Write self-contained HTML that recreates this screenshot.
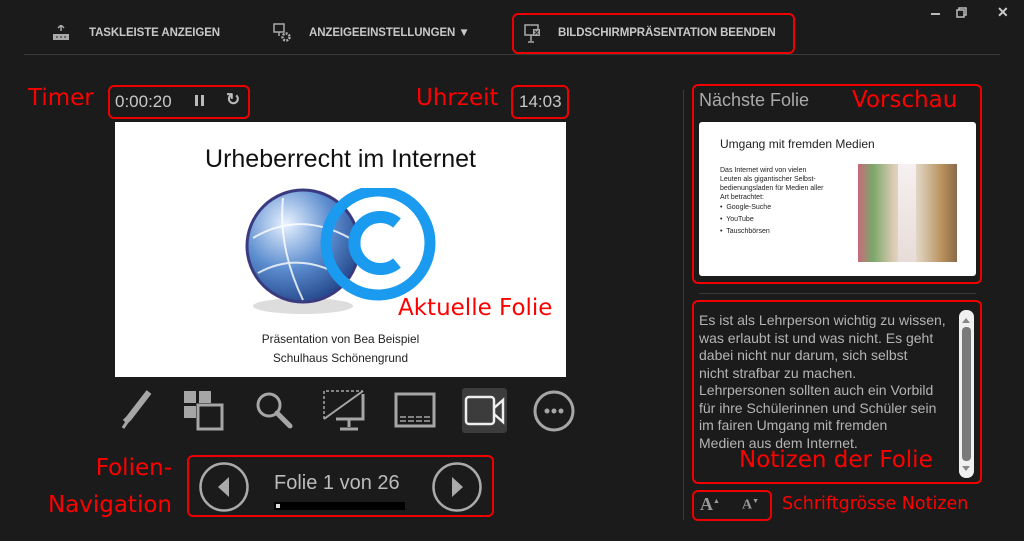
<!DOCTYPE html>
<html><head><meta charset="utf-8"><style>
*{margin:0;padding:0;box-sizing:border-box}
body{width:1024px;height:541px;background:#1b1b1b;position:relative;overflow:hidden;font-family:"Liberation Sans",sans-serif;color:#bbb}
.a{position:absolute}
.red{color:#f00;font-family:"DejaVu Sans","Liberation Sans",sans-serif;white-space:nowrap}
.box{position:absolute;border:2px solid #e00;border-radius:6px}
.tb{font-size:11.5px;font-weight:bold;color:#c8c8c8;letter-spacing:-.1px}
.gi{stroke:#a6a6a6;fill:none;stroke-width:3}
</style></head><body>
<!-- window controls -->
<div class="a" style="left:931px;top:13px;width:9px;height:2px;background:#bbb"></div>
<svg class="a" style="left:956px;top:7px" width="12" height="12"><rect x="1" y="3" width="7" height="7" fill="none" stroke="#bbb" stroke-width="1.5"/><path d="M3 3V1h7v7H8" fill="none" stroke="#bbb" stroke-width="1.5"/></svg>
<div class="a" style="left:997px;top:4px;font-size:14px;font-weight:bold;color:#ccc">✕</div>
<!-- toolbar -->
<svg class="a" style="left:52px;top:25px" width="18" height="16"><path d="M9 0v6M6 3l3-3 3 3" stroke="#aaa" fill="none" stroke-width="1.5"/><rect x="1" y="9" width="16" height="6" fill="#aaa"/><path d="M4 12h2M8 12h2M12 12h2" stroke="#222"/></svg>
<div class="a tb" style="left:89px;top:27px">TASKLEISTE ANZEIGEN</div>
<svg class="a" style="left:273px;top:23px" width="18" height="20"><rect x="1" y="1" width="10" height="8" fill="none" stroke="#aaa" stroke-width="1.5"/><path d="M6 9v4" stroke="#aaa" stroke-width="1.5"/><circle cx="13" cy="14" r="3.5" fill="none" stroke="#aaa" stroke-width="2.5" stroke-dasharray="2 1.2"/></svg>
<div class="a tb" style="left:309px;top:27px">ANZEIGEEINSTELLUNGEN ▼</div>
<div class="box" style="left:512px;top:13px;width:283px;height:41px"></div>
<svg class="a" style="left:524px;top:24px" width="18" height="20"><rect x="1" y="1" width="13" height="10" fill="none" stroke="#aaa" stroke-width="1.5"/><path d="M7 11v6M4 18h6" stroke="#aaa" stroke-width="1.5"/><rect x="9" y="5" width="7" height="7" fill="#aaa"/><path d="M10.5 6.5l4 4M14.5 6.5l-4 4" stroke="#222"/></svg>
<div class="a tb" style="left:558px;top:27px">BILDSCHIRMPRÄSENTATION BEENDEN</div>
<div class="a" style="left:24px;top:54px;width:976px;height:1px;background:#3a3a3a"></div>
<!-- timer -->
<div class="a red" style="left:28px;top:85px;font-size:23px">Timer</div>
<div class="box" style="left:108px;top:85px;width:142px;height:34px"></div>
<div class="a" style="left:115px;top:92px;font-size:17px;color:#c8c8c8">0:00:20</div>
<div class="a" style="left:195px;top:95px;width:3px;height:11px;background:#bbb"></div>
<div class="a" style="left:201px;top:95px;width:3px;height:11px;background:#bbb"></div>
<div class="a" style="left:226px;top:90px;font-size:17px;color:#bbb;font-weight:bold">↻</div>
<div class="a red" style="left:416px;top:85px;font-size:23px">Uhrzeit</div>
<div class="box" style="left:511px;top:85px;width:58px;height:34px"></div>
<div class="a" style="left:519px;top:92px;font-size:17px;color:#c8c8c8">14:03</div>
<!-- slide -->
<div class="a" style="left:115px;top:122px;width:451px;height:255px;background:#fff">
 <div class="a" style="left:0;width:451px;top:23px;text-align:center;font-size:25px;color:#111">Urheberrecht im Internet</div>
 <svg class="a" style="left:128px;top:66px" width="200" height="130">
  <defs><radialGradient id="g" cx="0.35" cy="0.3" r="0.8"><stop offset="0" stop-color="#e8f2ff"/><stop offset="0.5" stop-color="#5d8ed0"/><stop offset="1" stop-color="#1a3c80"/></radialGradient></defs>
  <ellipse cx="60" cy="118" rx="50" ry="8" fill="#ddd"/>
  <circle cx="60" cy="58" r="56" fill="url(#g)" stroke="#3a3a80" stroke-width="3"/>
  <path d="M10 50Q60 20 115 55M15 85Q60 60 110 95M40 10Q35 60 60 112" stroke="#fff" stroke-width="2" fill="none" opacity=".8"/>
  <circle cx="135" cy="55" r="52" fill="none" stroke="#1a9bf0" stroke-width="11"/>
  <path d="M154 35A26 26 0 1 0 154 75" fill="none" stroke="#1a9bf0" stroke-width="12"/>
 </svg>
 <div class="a" style="left:0;width:451px;top:208px;text-align:center;font-size:11.8px;color:#222;line-height:19px">Präsentation von Bea Beispiel<br>Schulhaus Schönengrund</div>
</div>
<div class="a red" style="left:398px;top:295px;font-size:23px">Aktuelle Folie</div>
<!-- tool icons -->
<svg class="a" style="left:115px;top:388px" width="42" height="44"><path d="M34 4L14 30l-4 4 4-4z" stroke="#a6a6a6" stroke-width="6" stroke-linecap="round"/><path d="M8 40l4-6" stroke="#a6a6a6" stroke-width="3"/></svg>
<svg class="a" style="left:183px;top:390px" width="42" height="42"><rect x="1" y="1" width="12" height="12" fill="#a6a6a6"/><rect x="16" y="1" width="12" height="12" fill="#a6a6a6"/><rect x="1" y="16" width="12" height="12" fill="#a6a6a6"/><rect x="15" y="15" width="24" height="24" class="gi"/></svg>
<svg class="a" style="left:254px;top:390px" width="42" height="42"><circle cx="15" cy="15" r="11" class="gi"/><path d="M23 23l13 13" stroke="#a6a6a6" stroke-width="5" stroke-linecap="round"/></svg>
<svg class="a" style="left:322px;top:389px" width="44" height="44"><path d="M2 30V2h39" stroke="#a6a6a6" stroke-width="1.5" stroke-dasharray="3 2" fill="none"/><path d="M2 30L41 2" stroke="#a6a6a6" stroke-width="2"/><path d="M41 5v25H14" class="gi" stroke-width="2"/><path d="M27 30v8M18 40h18" stroke="#a6a6a6" stroke-width="3"/></svg>
<svg class="a" style="left:394px;top:392px" width="42" height="38"><rect x="2" y="2" width="38" height="32" class="gi" stroke-width="2.5"/><path d="M6 25h30M6 29h30" stroke="#a6a6a6" stroke-dasharray="6 2" stroke-width="1.5"/></svg>
<div class="a" style="left:462px;top:388px;width:45px;height:45px;background:#3c3c3c;border-radius:3px"></div>
<svg class="a" style="left:464px;top:395px" width="42" height="32"><rect x="2" y="2" width="28" height="27" rx="3" fill="none" stroke="#eee" stroke-width="2.5"/><path d="M30 13l9-8v22l-9-8" fill="none" stroke="#eee" stroke-width="2.5"/></svg>
<svg class="a" style="left:533px;top:390px" width="42" height="42"><circle cx="21" cy="21" r="19" class="gi" stroke-width="2.5"/><circle cx="14" cy="21" r="2.5" fill="#a6a6a6"/><circle cx="21" cy="21" r="2.5" fill="#a6a6a6"/><circle cx="28" cy="21" r="2.5" fill="#a6a6a6"/></svg>
<!-- nav -->
<div class="a red" style="right:852px;top:455px;font-size:23px">Folien-</div>
<div class="a red" style="right:852px;top:492px;font-size:23px">Navigation</div>
<div class="box" style="left:187px;top:455px;width:307px;height:62px"></div>
<svg class="a" style="left:198px;top:461px" width="52" height="52"><circle cx="26" cy="26" r="23.5" fill="none" stroke="#aaa" stroke-width="2.5"/><path d="M31 16v20l-11-10z" fill="#aaa"/></svg>
<svg class="a" style="left:431px;top:461px" width="52" height="52"><circle cx="26" cy="26" r="23.5" fill="none" stroke="#aaa" stroke-width="2.5"/><path d="M21 16v20l11-10z" fill="#aaa"/></svg>
<div class="a" style="left:274px;top:472px;font-size:20px;color:#bbb">Folie 1 von 26</div>
<div class="a" style="left:274px;top:502px;width:131px;height:8px;background:#000"></div>
<div class="a" style="left:276px;top:504px;width:4px;height:4px;background:#ddd"></div>
<!-- right pane -->
<div class="a" style="left:683px;top:90px;width:1px;height:430px;background:#3a3a3a"></div>
<div class="box" style="left:692px;top:84px;width:290px;height:200px"></div>
<div class="a" style="left:699px;top:90px;font-size:18px;color:#aaa">Nächste Folie</div>
<div class="a red" style="left:852px;top:87px;font-size:23px">Vorschau</div>
<div class="a" style="left:699px;top:122px;width:277px;height:154px;background:#fff;border-radius:3px;color:#222">
 <div class="a" style="left:21px;top:15px;font-size:12px">Umgang mit fremden Medien</div>
 <div class="a" style="left:21px;top:44px;font-size:7px;line-height:9px;white-space:nowrap">Das Internet wird von vielen<br>Leuten als gigantischer Selbst-<br>bedienungsladen für Medien aller<br>Art betrachtet:<br><span style="line-height:12px">•&nbsp; Google-Suche<br>•&nbsp; YouTube<br>•&nbsp; Tauschbörsen</span></div>
 <div class="a" style="left:159px;top:42px;width:99px;height:98px;background:linear-gradient(90deg,#c86a7a 0%,#7aa86a 15%,#d8c8b0 35%,#f0e8e0 50%,#d8c8b0 65%,#b8905a 85%,#8a6a4a 100%)"></div>
 <div class="a" style="left:199px;top:42px;width:18px;height:98px;background:linear-gradient(#f6f0f0,#e8dcd8)"></div>
</div>
<div class="a" style="left:699px;top:293px;width:277px;height:1px;background:#3a3a3a"></div>
<div class="box" style="left:692px;top:300px;width:290px;height:184px"></div>
<div class="a" style="left:699px;top:312px;font-size:14px;line-height:17.5px;color:#b4b4b4;white-space:nowrap">Es ist als Lehrperson wichtig zu wissen,<br>was erlaubt ist und was nicht. Es geht<br>dabei nicht nur darum, sich selbst<br>nicht strafbar zu machen.<br>Lehrpersonen sollten auch ein Vorbild<br>für ihre Schülerinnen und Schüler sein<br>im fairen Umgang mit fremden<br>Medien aus dem Internet.</div>
<div class="a" style="left:959px;top:310px;width:15px;height:168px;background:#f0f0f0;border-radius:7px"></div>
<div class="a" style="left:962px;top:327px;width:9px;height:134px;background:#7a7a7a;border-radius:4px"></div>
<div class="a" style="left:962px;top:314px;width:0;height:0;border:4.5px solid transparent;border-bottom:5px solid #888"></div>
<div class="a" style="left:962px;top:466px;width:0;height:0;border:4.5px solid transparent;border-top:5px solid #888"></div>
<div class="a red" style="left:739px;top:447px;font-size:23px">Notizen der Folie</div>
<div class="box" style="left:692px;top:490px;width:80px;height:31px"></div>
<div class="a" style="left:700px;top:494px;font-family:'Liberation Serif',serif;font-weight:bold;font-size:18px;color:#999">A<sup style="font-size:7px">▲</sup></div>
<div class="a" style="left:742px;top:497px;font-family:'Liberation Serif',serif;font-weight:bold;font-size:14px;color:#999">A<sup style="font-size:7px">▼</sup></div>
<div class="a red" style="left:782px;top:494px;font-size:17.5px">Schriftgrösse Notizen</div>
</body></html>
